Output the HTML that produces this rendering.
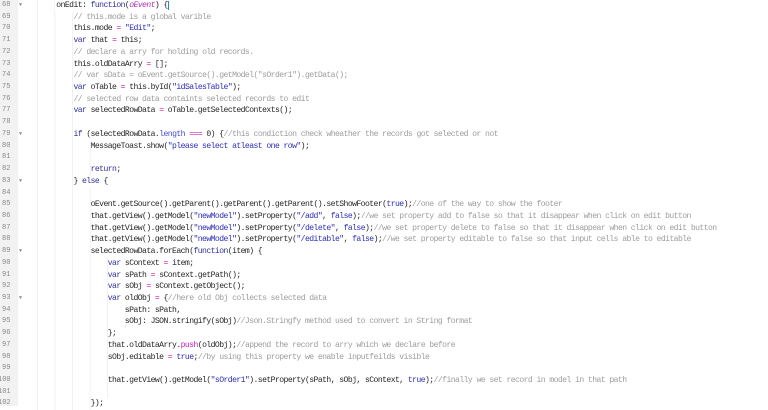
<!DOCTYPE html>
<html><head><meta charset="utf-8"><style>
html,body{margin:0;padding:0;background:#fff;width:768px;height:406px;overflow:hidden}
#g{position:absolute;left:0;top:0;width:18px;height:406px;background:#f2f2f2}
#c{position:absolute;left:0;top:0;width:768px;font-family:"Liberation Mono",monospace;font-size:8.1px;letter-spacing:-0.57px;color:#262626}
.l{position:relative;height:11.72px;line-height:11.72px;white-space:pre}
.n{position:absolute;left:0;width:14px;text-align:left;padding-left:2px;color:#888;font-size:7px;letter-spacing:0}
.n3{left:-4px}
.f{position:absolute;left:19px;color:#888;font-size:5px}
.t{position:absolute;left:22px}
.gd{position:absolute;left:20px;top:0;height:11.72px;background-image:linear-gradient(to right,transparent 17px,#e2e2e2 17px);background-size:17.6px 100%}
.k{color:#30309a}.s{color:#2c2cb8}.c{color:#9d9d9d}.o{color:#c821b8}.p{color:#4a4ad0}.i{color:#b030b0;font-style:italic}
</style></head><body>
<div id="g"></div>
<div id="c">
<div class="l"><span class="n">68</span><span class="f">▼</span><span class="gd" style="width:35px"></span><span class="t">        onEdit: <span class="k">function</span>(<span class="i">oEvent</span>) {<span style="border-left:1px solid #1e88e5"></span></span></div>
<div class="l"><span class="n">69</span><span class="gd" style="width:53px"></span><span class="t">            <span class="c">// this.mode is a global varible</span></span></div>
<div class="l"><span class="n">70</span><span class="gd" style="width:53px"></span><span class="t">            this.mode <span class="o">=</span> <span class="s">"Edit"</span>;</span></div>
<div class="l"><span class="n">71</span><span class="gd" style="width:53px"></span><span class="t">            <span class="k">var</span> that <span class="o">=</span> this;</span></div>
<div class="l"><span class="n">72</span><span class="gd" style="width:53px"></span><span class="t">            <span class="c">// declare a arry for holding old records.</span></span></div>
<div class="l"><span class="n">73</span><span class="gd" style="width:53px"></span><span class="t">            this.oldDataArry <span class="o">=</span> [];</span></div>
<div class="l"><span class="n">74</span><span class="gd" style="width:53px"></span><span class="t">            <span class="c">// var sData = oEvent.getSource().getModel("sOrder1").getData();</span></span></div>
<div class="l"><span class="n">75</span><span class="gd" style="width:53px"></span><span class="t">            <span class="k">var</span> oTable <span class="o">=</span> this.byId(<span class="s">"idSalesTable"</span>);</span></div>
<div class="l"><span class="n">76</span><span class="gd" style="width:53px"></span><span class="t">            <span class="c">// selected row data containts selected records to edit</span></span></div>
<div class="l"><span class="n">77</span><span class="gd" style="width:53px"></span><span class="t">            <span class="k">var</span> selectedRowData <span class="o">=</span> oTable.getSelectedContexts();</span></div>
<div class="l"><span class="n">78</span><span class="gd" style="width:53px"></span></div>
<div class="l"><span class="n">79</span><span class="f">▼</span><span class="gd" style="width:53px"></span><span class="t">            <span class="k">if</span> (selectedRowData.<span class="p">length</span> <span class="o">===</span> 0) {<span class="c">//this condiction check wheather the records got selected or not</span></span></div>
<div class="l"><span class="n">80</span><span class="gd" style="width:71px"></span><span class="t">                MessageToast.show(<span class="s">"please select atleast one row"</span>);</span></div>
<div class="l"><span class="n">81</span><span class="gd" style="width:71px"></span></div>
<div class="l"><span class="n">82</span><span class="gd" style="width:71px"></span><span class="t">                <span class="k">return</span>;</span></div>
<div class="l"><span class="n">83</span><span class="f">▼</span><span class="gd" style="width:53px"></span><span class="t">            } <span class="k">else</span> {</span></div>
<div class="l"><span class="n">84</span><span class="gd" style="width:71px"></span></div>
<div class="l"><span class="n">85</span><span class="gd" style="width:71px"></span><span class="t">                oEvent.getSource().getParent().getParent().getParent().setShowFooter(<span class="s">true</span>);<span class="c">//one of the way to show the footer</span></span></div>
<div class="l"><span class="n">86</span><span class="gd" style="width:71px"></span><span class="t">                that.getView().getModel(<span class="s">"newModel"</span>).setProperty(<span class="s">"/add"</span>, <span class="s">false</span>);<span class="c">//we set property add to false so that it disappear when click on edit button</span></span></div>
<div class="l"><span class="n">87</span><span class="gd" style="width:71px"></span><span class="t">                that.getView().getModel(<span class="s">"newModel"</span>).setProperty(<span class="s">"/delete"</span>, <span class="s">false</span>);<span class="c">//we set property delete to false so that it disappear when click on edit button</span></span></div>
<div class="l"><span class="n">88</span><span class="gd" style="width:71px"></span><span class="t">                that.getView().getModel(<span class="s">"newModel"</span>).setProperty(<span class="s">"/editable"</span>, <span class="s">false</span>);<span class="c">//we set property editable to false so that input cells able to editable</span></span></div>
<div class="l"><span class="n">89</span><span class="f">▼</span><span class="gd" style="width:71px"></span><span class="t">                selectedRowData.forEach(<span class="k">function</span>(item) {</span></div>
<div class="l"><span class="n">90</span><span class="gd" style="width:88px"></span><span class="t">                    <span class="k">var</span> sContext <span class="o">=</span> item;</span></div>
<div class="l"><span class="n">91</span><span class="gd" style="width:88px"></span><span class="t">                    <span class="k">var</span> sPath <span class="o">=</span> sContext.getPath();</span></div>
<div class="l"><span class="n">92</span><span class="gd" style="width:88px"></span><span class="t">                    <span class="k">var</span> sObj <span class="o">=</span> sContext.getObject();</span></div>
<div class="l"><span class="n">93</span><span class="f">▼</span><span class="gd" style="width:88px"></span><span class="t">                    <span class="k">var</span> oldObj <span class="o">=</span> {<span class="c">//here old Obj collects selected data</span></span></div>
<div class="l"><span class="n">94</span><span class="gd" style="width:106px"></span><span class="t">                        sPath: sPath,</span></div>
<div class="l"><span class="n">95</span><span class="gd" style="width:106px"></span><span class="t">                        sObj: JSON.stringify(sObj)<span class="c">//Json.Stringfy method used to convert in String format</span></span></div>
<div class="l"><span class="n">96</span><span class="gd" style="width:88px"></span><span class="t">                    };</span></div>
<div class="l"><span class="n">97</span><span class="gd" style="width:88px"></span><span class="t">                    that.oldDataArry.<span class="o">push</span>(oldObj);<span class="c">//append the record to arry which we declare before</span></span></div>
<div class="l"><span class="n">98</span><span class="gd" style="width:88px"></span><span class="t">                    sObj.editable <span class="o">=</span> <span class="s">true</span>;<span class="c">//by using this property we enable inputfeilds visible</span></span></div>
<div class="l"><span class="n">99</span><span class="gd" style="width:88px"></span></div>
<div class="l"><span class="n n3">100</span><span class="gd" style="width:88px"></span><span class="t">                    that.getView().getModel(<span class="s">"sOrder1"</span>).setProperty(sPath, sObj, sContext, <span class="s">true</span>);<span class="c">//finally we set record in model in that path</span></span></div>
<div class="l"><span class="n n3">101</span><span class="gd" style="width:88px"></span></div>
<div class="l"><span class="n n3">102</span><span class="gd" style="width:71px"></span><span class="t">                });</span></div>
</div>
</body></html>
